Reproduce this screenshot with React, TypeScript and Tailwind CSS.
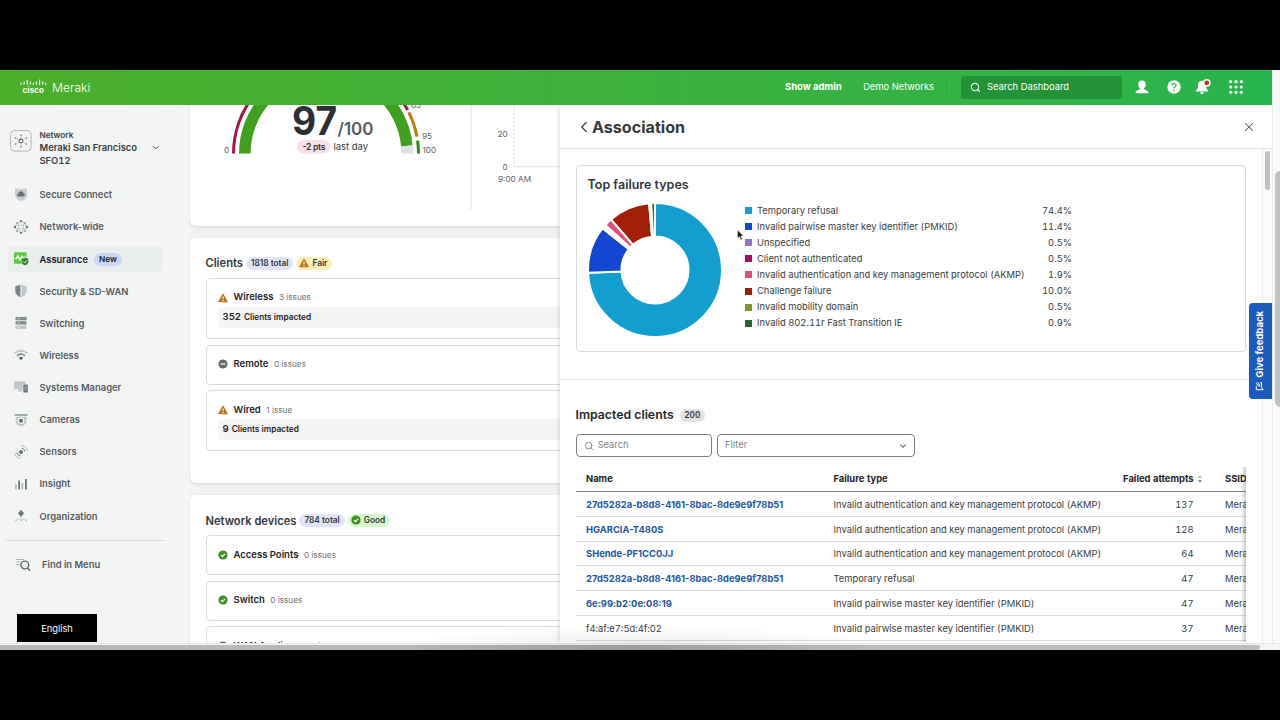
import type { ReactNode } from "react";
import clsx from "clsx";
import { ChevronDown, ChevronLeft, Search, X } from "lucide-react";

const FAILURES = [
  { label: "Temporary refusal", value: 74.4, color: "#129fd0" },
  { label: "Invalid pairwise master key identifier (PMKID)", value: 11.4, color: "#1546d2" },
  { label: "Unspecified", value: 0.5, color: "#9470c8" },
  { label: "Client not authenticated", value: 0.5, color: "#a3085a" },
  { label: "Invalid authentication and key management protocol (AKMP)", value: 1.9, color: "#de4f7a" },
  { label: "Challenge failure", value: 10.0, color: "#a11f06" },
  { label: "Invalid mobility domain", value: 0.5, color: "#7f9a1c" },
  { label: "Invalid 802.11r Fast Transition IE", value: 0.9, color: "#2c6430" },
];

const AKMP = "Invalid authentication and key management protocol (AKMP)";
const PMKID = "Invalid pairwise master key identifier (PMKID)";

const CLIENTS = [
  { name: "27d5282a-b8d8-4161-8bac-8de9e9f78b51", type: AKMP, attempts: 137, link: true },
  { name: "HGARCIA-T480S", type: AKMP, attempts: 128, link: true },
  { name: "SHende-PF1CC0JJ", type: AKMP, attempts: 64, link: true },
  { name: "27d5282a-b8d8-4161-8bac-8de9e9f78b51", type: "Temporary refusal", attempts: 47, link: true },
  { name: "6e:99:b2:0e:08:19", type: PMKID, attempts: 47, link: true },
  { name: "f4:af:e7:5d:4f:02", type: PMKID, attempts: 37, link: false },
];

function polar(cx: number, cy: number, r: number, deg: number) {
  const a = ((deg - 90) * Math.PI) / 180;
  return `${(cx + r * Math.cos(a)).toFixed(2)} ${(cy + r * Math.sin(a)).toFixed(2)}`;
}

// ring segment, angles in degrees clockwise from 12 o'clock
function ring(cx: number, cy: number, outer: number, inner: number, from: number, to: number) {
  const large = to - from > 180 ? 1 : 0;
  return `M${polar(cx, cy, outer, from)}A${outer} ${outer} 0 ${large} 1 ${polar(cx, cy, outer, to)}L${polar(cx, cy, inner, to)}A${inner} ${inner} 0 ${large} 0 ${polar(cx, cy, inner, from)}Z`;
}

/* ---------- icons ---------- */

const NAV_ICONS: Record<string, ReactNode> = {
  secure: (
    <>
      <path d="M1 .8h12v6c0 3.400-3 5.500-6 6.500-3-1-6-3.100-6-6.500z" fill="#c9cdcf" />
      <path d="M4.600 8.600a1.600 1.600 0 0 1-.2-3.200 2.600 2.600 0 0 1 5-.3 1.800 1.800 0 0 1 .2 3.500z" fill="#6b7276" />
    </>
  ),
  network: (
    <>
      <g fill="none" stroke="#b9bdc0" strokeWidth=".8">
        <circle cx="7" cy="7" r="5.500" />
        <ellipse cx="7" cy="7" rx="2.600" ry="5.500" />
        <path d="M2 5.300h10M2 8.700h10" />
      </g>
      <g fill="#6b7276">
        <circle cx="7" cy="1" r="1.100" />
        <circle cx="7" cy="13" r="1.100" />
        <circle cx="1" cy="7" r="1.200" />
        <circle cx="13" cy="7" r="1.200" />
        <circle cx="3" cy="3" r=".8" />
        <circle cx="11" cy="3" r=".8" />
        <circle cx="3" cy="11" r=".8" />
        <circle cx="11" cy="11" r=".8" />
      </g>
    </>
  ),
  assurance: (
    <>
      <rect x="0" y=".3" width="12.500" height="11.500" rx="1" fill="#5cc741" />
      <path d="M.5 6.500h2l1.300-3 2 4.500 1.800-4 1.200 2.500 1-1.500h2" fill="none" stroke="#fff" strokeWidth="1.100" />
      <path d="M7.300 6.500 11 5.500l3.700 1v3.200c0 2-1.800 3.200-3.700 4-1.900-.8-3.700-2-3.700-4z" fill="#35822a" stroke="#f0f2f3" strokeWidth=".6" />
      <path d="m9.300 9.500 1.300 1.300 2.200-2.300" fill="none" stroke="#fff" strokeWidth="1" />
    </>
  ),
  security: (
    <>
      <path d="M6.400.8v12.600C3.500 12 1.300 10 1.300 7V2.200z" fill="#7c8387" />
      <path d="M7.600.8v12.600C10.500 12 12.700 10 12.700 7V2.200z" fill="#c3c7c9" />
    </>
  ),
  switching: (
    <>
      <rect x="1.500" y="1" width="11" height="3.300" rx=".6" fill="#84898c" />
      <rect x="1.500" y="5.300" width="11" height="3.300" rx=".6" fill="#84898c" />
      <rect x="1.500" y="9.600" width="11" height="3.300" rx=".6" fill="#c3c7c9" />
      <path d="M3 2.700h3M3 7h3M3 11.300h3" stroke="#f3f4f4" strokeWidth=".6" />
    </>
  ),
  wireless: (
    <g fill="none">
      <path d="M.4 5.400Q7 .2 13.600 5.400" stroke="#c3c7c9" strokeWidth="1.800" />
      <path d="M2.900 7.900q4.100-3.400 8.200 0" stroke="#84898c" strokeWidth="1.700" />
      <path d="M4.700 9.700Q7 8 9.300 9.700L7 12.200z" fill="#5f666a" />
    </g>
  ),
  systems: (
    <>
      <path d="M0 1.300h11.500v3H9v5H0zM4.500 9.300h4v2.200h-5z" fill="#c3c7c9" />
      <rect x="9.300" y="4.500" width="4.500" height="8" rx=".6" fill="#6b7276" />
      <path d="M10.300 5.800h2.500v4.700h-2.500z" fill="#8f9598" />
    </>
  ),
  cameras: (
    <>
      <rect x=".5" y="1" width="13" height="2" fill="#a3a8ab" />
      <path d="M1.500 3.800h11v3.700a5.500 5.500 0 0 1-11 0z" fill="#c3c7c9" />
      <circle cx="7" cy="7.800" r="3.300" fill="#f3f4f4" />
      <circle cx="7" cy="7.800" r="2" fill="#5f666a" />
    </>
  ),
  sensors: (
    <g fill="none">
      <circle cx="7" cy="7" r="2" fill="#6b7276" />
      <path d="M7.500 3a4 4 0 0 1 3.500 3.500M6.500 11A4 4 0 0 1 3 7.500" stroke="#7c8387" strokeWidth="1" />
      <path d="M7.800.6a6.500 6.500 0 0 1 5.600 5.600M6.200 13.400A6.500 6.500 0 0 1 .6 7.800" stroke="#b5babc" strokeWidth="1" />
    </g>
  ),
  insight: (
    <>
      <path d="M1 7.500h1.800V12.500H1zM7.400 6h1.800v6.500H7.400z" fill="#b5babc" />
      <path d="M4.200 3.500H6v9H4.200zM11 2h1.800v10.500H11z" fill="#6b7276" />
    </>
  ),
  organization: (
    <>
      <path d="M7 7v4M2 11.500V10.200h10v1.300" fill="none" stroke="#c3c7c9" strokeWidth=".8" />
      <path d="M1.200 11h1.800v1.200H1.200zM6.100 11h1.800v1.200H6.100zM11 11h1.800v1.200H11z" fill="#c3c7c9" />
      <path d="M7 1.200 9.800 4.300 7 7.400 4.200 4.300z" fill="#6b7276" stroke="#6b7276" strokeWidth=".6" strokeLinejoin="round" />
    </>
  ),
};

const NAV = [
  { icon: "secure", label: "Secure Connect" },
  { icon: "network", label: "Network-wide" },
  { icon: "assurance", label: "Assurance", active: true },
  { icon: "security", label: "Security & SD-WAN" },
  { icon: "switching", label: "Switching" },
  { icon: "wireless", label: "Wireless" },
  { icon: "systems", label: "Systems Manager" },
  { icon: "cameras", label: "Cameras" },
  { icon: "sensors", label: "Sensors" },
  { icon: "insight", label: "Insight" },
  { icon: "organization", label: "Organization" },
];

function StatusIcon({ status }: { status: string }) {
  if (status === "warn") {
    return (
      <svg viewBox="0 0 10 10" className="size-[10px] shrink-0">
        <path d="M5 1 9.300 8.800H.7z" fill="#b8761a" stroke="#b8761a" strokeWidth="1" strokeLinejoin="round" />
        <path d="M5 3.500v2.800M5 7.100v1.100" stroke="#fff" strokeWidth="1.100" />
      </svg>
    );
  }
  return (
    <svg viewBox="0 0 10 10" className="size-[10px] shrink-0">
      <circle cx="5" cy="5" r="4.600" fill={status === "good" ? "#3f8f24" : "#656c71"} />
      <path d={status === "good" ? "m3 5.200 1.400 1.400L7.100 3.900" : "M2.500 5h5"} fill="none" stroke="#fff" strokeWidth="1.200" />
    </svg>
  );
}

/* ---------- header ---------- */

function Header() {
  return (
    <header className="flex h-[35px] shrink-0 items-center bg-linear-to-r from-[#4caf2a] to-[#27b44c] pb-px text-white">
      <svg viewBox="0 0 28 16" className="ml-[20px] h-[16px] w-[28px]">
        <path
          d="M1 4v1.300M4.100 2.800v2.500M7.200 1v4.500M10.300 2.800v2.500M13.400 4v1.300M16.500 2.800v2.500M19.600 1v4.500M22.700 2.800v2.500M25.800 4v1.300"
          stroke="#fff"
          strokeWidth="1.100"
          strokeLinecap="round"
        />
        <text x="2.500" y="13.500" fill="#fff" fontSize="8" fontWeight="700" textLength="21.500">cisco</text>
      </svg>
      <span className="mt-[2px] ml-[4px] text-[12.200px] font-light">Meraki</span>
      <span className="mt-px ml-auto text-[9.500px] font-bold">Show admin</span>
      <span className="ml-[21.500px] text-[9.300px]">Demo Networks</span>
      <div className="ml-[15px] h-[12px] w-px bg-white/10" />
      <div className="mt-px ml-[11px] flex h-[23px] w-[161px] items-center gap-[6px] rounded-[3px] bg-[#239237] pl-[9px] text-[9.400px]">
        <Search className="size-[11px]" strokeWidth={2.200} />
        Search Dashboard
      </div>
      <svg viewBox="0 0 14 14" className="ml-[13px] size-[14px]" fill="#fff">
        <path d="M7 .5c2.300 0 3.800 1.600 3.800 3.900 0 1.700-.8 3.100-1.800 3.900v.9c1.500.6 4.300 1.300 4.500 4H.5c.2-2.700 3-3.400 4.500-4v-.9c-1-.8-1.800-2.200-1.800-3.900C3.200 2.100 4.700.5 7 .5z" />
      </svg>
      <svg viewBox="0 0 14 14" className="ml-[18px] size-[14px]">
        <circle cx="7" cy="7" r="6.700" fill="#fff" />
        <path d="M5 5.600c0-2.600 4-2.400 4 0C9 7 7 7.100 7 8.500M7 9.700v1.200" fill="none" stroke="#2fae45" strokeWidth="1.200" />
      </svg>
      <svg viewBox="0 0 16 16" className="ml-[14px] size-[16px]">
        <path d="M7 1.800c2.600 0 4 2 4 4.500 0 2.700.6 3.900 2.200 5.100v1H.8v-1C2.400 10.200 3 9 3 6.300c0-2.500 1.400-4.500 4-4.500zM5 13.200h4a2 2 0 0 1-4 0z" fill="#fff" />
        <circle cx="11.800" cy="3.900" r="3.100" fill="#b03a2e" stroke="#fff" strokeWidth="1.400" />
      </svg>
      <svg viewBox="0 0 14 14" className="mr-[29px] ml-[18px] size-[14px]" fill="#fff">
        {[1.7, 7, 12.3].map((y) => [1.7, 7, 12.3].map((x) => <circle key={`${x}-${y}`} cx={x} cy={y} r="1.600" />))}
      </svg>
    </header>
  );
}

/* ---------- sidebar ---------- */

function Sidebar() {
  return (
    <aside className="flex w-[189px] shrink-0 flex-col bg-[#f3f4f4] text-[#565b5f]">
      <div className="flex h-[73.600px] shrink-0 items-start pl-[10px]">
        <svg viewBox="0 0 22 22" className="mt-[25px] size-[22px]">
          <rect x=".6" y=".6" width="20.500" height="20.500" rx="4" fill="none" stroke="#b4b8ba" />
          <circle cx="11" cy="11" r="1.900" fill="none" stroke="#62686c" strokeWidth="1.100" />
          <path d="M11 6.500v2M11 13.500v2M6.800 8.500l1.700 1M13.500 12.500l1.700 1M6.800 13.500l1.700-1M13.500 9.500l1.700-1" stroke="#a3a8ab" strokeWidth=".7" />
          <g fill="#62686c">
            <circle cx="11" cy="5.300" r=".8" />
            <circle cx="11" cy="16.700" r=".8" />
            <circle cx="5.600" cy="8" r=".8" />
            <circle cx="16.400" cy="8" r=".8" />
            <circle cx="5.600" cy="14" r=".8" />
            <circle cx="16.400" cy="14" r=".8" />
          </g>
        </svg>
        <div className="mt-[23.500px] ml-[7.500px] w-[112px] font-semibold text-[#393e42]">
          <div className="text-[8.200px] leading-[12.500px]">Network</div>
          <div className="text-[9.400px] leading-[13.300px] tabular-nums">
            Meraki San Francisco
            <br />
            SFO12
          </div>
        </div>
        <ChevronDown className="mt-[38px] -ml-[0.500px] size-[9.500px] text-[#393e42]" strokeWidth={2.400} />
      </div>

      <nav>
        {NAV.map((item) => (
          <div key={item.label} className="flex h-[32.130px] items-center pl-[8px]">
            <div
              className={clsx(
                "flex h-[26px] w-[155px] items-center rounded-[4px] pl-[6px]",
                item.active && "bg-[#ebeeef] text-[#1c2023]",
              )}
            >
              <svg viewBox="0 0 14 14" className="size-[14px] shrink-0 overflow-visible">
                {NAV_ICONS[item.icon]}
              </svg>
              <span className="mt-[1.500px] ml-[11.500px] text-[9.400px] font-semibold">{item.label}</span>
              {item.active && (
                <span className="mt-px ml-[5.500px] rounded-full bg-[#cbd7f4] px-[5.500px] text-[8.200px] leading-[13px] font-semibold">New</span>
              )}
            </div>
          </div>
        ))}
      </nav>

      <div className="mt-[8px] ml-[5px] h-px w-[160px] shrink-0 bg-[#dcdfe0]" />
      <div className="mt-[17px] flex shrink-0 items-center pl-[16px]">
        <svg viewBox="0 0 15 14" className="h-[14px] w-[15px]" fill="none">
          <path d="M0 1.500h8M0 4h5M0 6.500h4" stroke="#b0b5b8" strokeWidth="1" />
          <circle cx="8.800" cy="7" r="3.900" stroke="#62686c" strokeWidth="1.400" />
          <path d="m11.500 10 2.600 2.700" stroke="#62686c" strokeWidth="1.500" />
        </svg>
        <span className="ml-[11px] text-[9.400px] font-semibold">Find in Menu</span>
      </div>
      <div className="mt-auto mb-[1px] ml-[17px] flex h-[28px] w-[80px] shrink-0 items-center justify-center bg-black pt-px text-[9.300px] text-white">
        English
      </div>
    </aside>
  );
}

/* ---------- main ---------- */

function HealthGauge() {
  return (
    <svg viewBox="190 105 370 121" className="block h-[121px] w-[370px]">
      <path d={ring(326, 153.5, 87, 75.5, -90, 84.6)} fill="#419f1f" />
      <path d={ring(326, 153.5, 87, 75.5, 84.6, 90)} fill="#dfe1e3" />
      <path d={ring(326, 153.5, 94, 91, -90, 62)} fill="#a3193d" />
      <path d={ring(326, 153.5, 94, 91, 63.5, 79.5)} fill="#b87d14" />
      <path d={ring(326, 153.5, 94, 91, 82, 90)} fill="#2f8a1d" />
      <g fill="#5d6266" fontSize="8.200">
        <text x="224" y="153">0</text>
        <text x="411" y="107.500">85</text>
        <text x="422" y="138.500">95</text>
        <text x="422.500" y="152.700">100</text>
        <text x="497.500" y="136.500">20</text>
        <text x="502.500" y="170">0</text>
        <text x="498" y="181.500">9:00 AM</text>
      </g>
      <text x="292" y="134.500" fill="#2c3034" fontSize="39" fontWeight="700" textLength="45" lengthAdjust="spacingAndGlyphs">97</text>
      <text x="337.500" y="134.500" fill="#565b5f" fontSize="17" fontWeight="600" textLength="36" lengthAdjust="spacingAndGlyphs">/100</text>
      <rect x="297" y="140" width="33.500" height="13.500" rx="6.700" fill="#fae1e6" />
      <text x="302.500" y="149.900" fill="#2c3034" fontSize="8.600" fontWeight="600" textLength="23">-2 pts</text>
      <text x="333.500" y="150.200" fill="#393e42" fontSize="9.500" textLength="34.500">last day</text>
      <path d="M471 105v105" stroke="#e1e3e4" />
      <path d="M514.500 105v62" stroke="#d5d7d9" strokeDasharray="2 2" />
      <path d="M514.500 166.700H560" stroke="#e1e3e4" />
    </svg>
  );
}

function Section({ title, total, status, rating, children }: { title: string; total: string; status: string; rating: string; children: ReactNode }) {
  return (
    <section className="shrink-0 rounded-l-[6px] bg-white pt-[18px] pl-[15.500px] shadow-[0_1px_3px_rgba(0,0,0,0.12)]">
      <div className="mb-[8px] flex h-[14px] items-center">
        <h2 className="pt-px text-[11.150px] font-semibold text-[#33383c]">{title}</h2>
        <span className="ml-[3px] rounded-full bg-[#e3e4fa] px-[5px] text-[8.300px] leading-[13px] font-semibold text-[#33383c]">{total}</span>
        <span
          className={clsx(
            "ml-[3px] flex items-center gap-[3px] rounded-full px-[3px] pr-[5px] text-[8.300px] leading-[13px] font-semibold text-[#33383c]",
            status === "warn" ? "bg-[#f9efb4]" : "bg-[#d8f7cd]",
          )}
        >
          <StatusIcon status={status} />
          {rating}
        </span>
      </div>
      {children}
    </section>
  );
}

function HealthRow({ status, name, issues, impacted }: { status: string; name: string; issues: string; impacted?: number }) {
  return (
    <div
      className={clsx(
        "mb-[5.600px] w-[380px] rounded-[4px] border-[1.500px] border-[#d9dcdd] pt-[11px] pl-[11px]",
        impacted ? "h-[61.200px]" : "h-[39.800px]",
      )}
    >
      <div className="flex h-[15px] items-center">
        <StatusIcon status={status} />
        <span className="ml-[6px] text-[9.500px] font-semibold text-[#1f2326]">{name}</span>
        <span className="ml-[5.500px] text-[8.200px] text-[#6b7175]">{issues}</span>
      </div>
      {impacted && (
        <div className="mt-[1.500px] flex h-[21px] items-center rounded-[4px] bg-[#f3f4f4] pl-[5px] font-semibold text-[#1f2326] tabular-nums">
          <span className="text-[9.500px]">{impacted}</span>
          <span className="ml-[3px] text-[8.250px]">Clients impacted</span>
        </div>
      )}
    </div>
  );
}

function Overview() {
  return (
    <main className="flex w-[371px] shrink-0 flex-col gap-[12px] overflow-hidden bg-[#f1f2f2] pl-px">
      <section className="shrink-0 rounded-bl-[6px] bg-white shadow-[0_1px_3px_rgba(0,0,0,0.12)]">
        <HealthGauge />
      </section>
      <Section title="Clients" total="1818 total" status="warn" rating="Fair">
        <HealthRow status="warn" name="Wireless" issues="3 issues" impacted={352} />
        <HealthRow status="none" name="Remote" issues="0 issues" />
        <HealthRow status="warn" name="Wired" issues="1 issue" impacted={9} />
        <div className="h-[26.500px]" />
      </Section>
      <Section title="Network devices" total="784 total" status="good" rating="Good">
        <HealthRow status="good" name="Access Points" issues="0 issues" />
        <HealthRow status="good" name="Switch" issues="0 issues" />
        <HealthRow status="none" name="WAN Appliance" issues="0 issues" />
      </Section>
    </main>
  );
}

/* ---------- drawer ---------- */

function Donut() {
  const total = FAILURES.reduce((sum, f) => sum + f.value, 0);
  let angle = 0;
  return (
    <svg viewBox="0 0 134 134" className="size-[134px] shrink-0">
      {FAILURES.map((f) => {
        const from = angle;
        angle += (f.value / total) * 360;
        return <path key={f.label} d={ring(67, 67, 67, 33.5, from, angle)} fill={f.color} stroke="#fff" strokeWidth="2" />;
      })}
    </svg>
  );
}

function FailureCard() {
  return (
    <section className="h-[187px] w-[670px] rounded-[4px] border-[1.500px] border-[#d9dcdd] pt-[9.500px] pl-[11px]">
      <h3 className="text-[12.500px] leading-[18px] font-semibold text-[#33383c]">Top failure types</h3>
      <div className="mt-[9px] flex">
        <Donut />
        <ul className="ml-[23.500px] w-[327px] text-[9.400px] leading-[16.100px] text-[#393e42] tabular-nums">
          {FAILURES.map((f) => (
            <li key={f.label} className="flex h-[16.100px] items-center">
              <svg viewBox="0 0 7 7" className="size-[7px]">
                <rect width="7" height="7" fill={f.color} />
              </svg>
              <span className="ml-[5px]">{f.label}</span>
              <span className="ml-auto">{f.value.toFixed(1)}%</span>
            </li>
          ))}
        </ul>
      </div>
    </section>
  );
}

function ClientsTable() {
  return (
    <div className="relative mt-[10px] h-[175px] w-[670px] overflow-hidden text-[9.400px] whitespace-nowrap text-[#393e42] tabular-nums">
      <div className="flex h-[25.500px] w-[720px] items-center border-b-[1.500px] border-[#7b8083] pt-px pl-[10.500px] font-bold text-[#1f2326]">
        <span className="w-[247.500px]">Name</span>
        <span className="w-[270px]">Failure type</span>
        <span className="w-[90px] text-right">Failed attempts</span>
        <svg viewBox="0 0 6 8" className="ml-[3.500px] h-[8px] w-[6px]">
          <path d="M3 .3 5.300 3H.7z" fill="#b8bcbf" />
          <path d="M3 7.700 5.300 5H.7z" fill="#85898c" />
        </svg>
        <span className="ml-[22px]">SSID</span>
      </div>
      {CLIENTS.map((c, i) => (
        <div key={i} className="flex h-[24.800px] w-[720px] items-center border-b border-[#d8dadc] pt-[2px] pl-[10.500px]">
          <span className={clsx("w-[247.500px]", c.link && "font-bold text-[#2556a3] normal-nums")}>{c.name}</span>
          <span className="w-[270px]">{c.type}</span>
          <span className="w-[90px] text-right">{c.attempts}</span>
          <span className="ml-[31.500px]">Meraki</span>
        </div>
      ))}
      <div className="absolute inset-y-0 right-0 w-[5px] bg-linear-to-r from-transparent to-black/20" />
    </div>
  );
}

function Drawer() {
  return (
    <div className="relative z-10 flex w-[712px] flex-col bg-white shadow-[0_0_5px_rgba(0,0,0,0.2)]">
      <div className="flex h-[44px] shrink-0 items-center border-b border-[#e1e3e4] pl-[14.500px]">
        <ChevronLeft className="size-[18px] text-[#33383c]" strokeWidth={1.5} />
        <h1 className="mt-px -ml-[0.500px] text-[16.100px] font-bold text-[#33383c]">Association</h1>
        <X className="mr-[16px] ml-auto size-[14px] text-[#565b5f]" strokeWidth={1.8} />
      </div>
      <div className="flex min-h-0 flex-1">
        <div className="w-[702px] overflow-hidden pt-[16px]">
          <div className="pl-[15.500px]">
            <FailureCard />
          </div>
          <div className="mt-[26.500px] h-px bg-[#e6e8e9]" />
          <div className="pt-[27px] pl-[15.500px]">
            <div className="flex h-[16px] items-center">
              <h3 className="mt-[1.500px] text-[12.300px] font-semibold text-[#23282b]">Impacted clients</h3>
              <span className="mt-px ml-[6px] rounded-full bg-[#e1e3e4] px-[4.500px] text-[8.300px] leading-[13px] font-semibold text-[#33383c] tabular-nums">200</span>
            </div>
            <div className="mt-[11px] flex gap-[5px] text-[9.400px] text-[#7f8589]">
              <div className="flex h-[23px] w-[136.500px] items-center gap-[4px] rounded-[4px] border-[1.500px] border-[#7b8083] pt-px pl-[7px]">
                <Search className="size-[10px]" strokeWidth={2.200} />
                Search
              </div>
              <div className="flex h-[23px] w-[198px] items-center justify-between rounded-[4px] border-[1.500px] border-[#7b8083] pt-px pr-[6px] pl-[7px]">
                Filter
                <ChevronDown className="size-[10px]" strokeWidth={2.600} />
              </div>
            </div>
            <ClientsTable />
          </div>
        </div>
        <div className="w-[10px] border-l border-[#e9ebec] bg-[#fafafa] pt-[2px] pl-[1.500px]">
          <div className="h-[39px] w-[5.500px] rounded-full bg-[#bfc0c1]" />
        </div>
      </div>
      <div className="absolute top-[198px] right-0 flex h-[96px] w-[23px] items-center justify-center rounded-l-[4px] bg-[#1d5ac0] text-white">
        <div className="flex rotate-180 items-center gap-[4px] text-[9.500px] font-bold [writing-mode:vertical-rl]">
          <svg viewBox="0 0 9 9" className="size-[9px] rotate-90" fill="none" stroke="#fff" strokeWidth="1">
            <path d="M5 1H1v7l2-1.700h5V4.500M4.700 4.500V3.500L7.300 1l1 1-2.600 2.500z" />
          </svg>
          <span className="whitespace-nowrap">Give feedback</span>
        </div>
      </div>
    </div>
  );
}

export default function App() {
  return (
    <div className="h-[720px] w-[1280px] bg-black pt-[70px] font-['Inter',sans-serif] leading-normal">
      <div className="relative flex h-[580px] flex-col overflow-hidden bg-[#f5f5f5]">
        <div className="flex h-[573px]">
          <div className="flex w-[1272px] flex-col">
            <Header />
            <div className="flex min-h-0 flex-1 overflow-hidden">
              <Sidebar />
              <Overview />
              <Drawer />
            </div>
          </div>
          {/* page scrollbar */}
          <div className="w-[8px] border-l border-[#e9ebec] bg-[#fafafa] pt-[101px] pl-[2px]">
            <div className="h-[236px] w-[5px] rounded-l-full bg-[#bfc0c1]" />
          </div>
        </div>
        <div className="h-[7px] border-t border-[#e6e8e9] pt-px">
          <div className="h-[5px] w-[1260px] rounded-r-full bg-linear-to-r from-[#b8b8b8] from-30% via-[#9b9b9b] via-50% to-[#bcbcbc] to-70%" />
        </div>
        <div className="pointer-events-none absolute bottom-[5px] left-[390px] z-20 h-[20px] w-[500px] bg-[radial-gradient(ellipse_at_bottom,rgba(0,0,0,0.08),transparent_70%)]" />
        <svg viewBox="0 0 8 13" className="absolute top-[159px] left-[737px] z-30 h-[12px] w-[7px]">
          <path d="M.6.800v9.400l2.200-2 1.500 3.600 1.600-.7-1.500-3.500h2.900z" fill="#111" stroke="#fff" strokeWidth=".5" />
        </svg>
      </div>
    </div>
  );
}
